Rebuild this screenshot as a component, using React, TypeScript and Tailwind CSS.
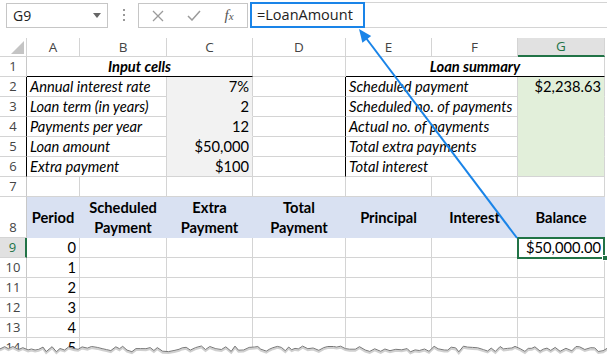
import type { ReactNode } from 'react'

const grid = 'border-[#d4d4d4]'

interface CellProps {
  w: string
  className?: string
  children?: ReactNode
}

const Cell = ({ w, className = '', children }: CellProps) => (
  <div
    className={`${w} h-full shrink-0 border-r border-b ${grid} flex items-center overflow-visible whitespace-nowrap px-[3px] ${className}`}
  >
    {children}
  </div>
)

const RowHead = ({
  n,
  className = '',
  active = false,
}: {
  n: string
  className?: string
  active?: boolean
}) => (
  <div
    className={`w-[27px] h-full shrink-0 border-b ${grid} flex justify-center font-['Open_Sans',sans-serif] text-[13px] ${
      active
        ? 'bg-[#e1e1e1] text-[#217346] border-r-2 border-r-[#217346]'
        : 'text-[#444] border-r border-r-[#c8c8c8]'
    } ${className}`}
  >
    {n}
  </div>
)

const Toolbar = () => (
  <div className="h-[38px] flex items-start pt-[2px] font-['Open_Sans',sans-serif]">
    <div className="ml-[6px] mt-[1px] w-[102px] h-[25px] border border-[#c6c6c6] flex items-center justify-between pl-[6px] pr-[6px] text-[14px] text-[#222]">
      <span>G9</span>
      <svg width="8" height="5" viewBox="0 0 8 5">
        <path d="M0 0h8L4 5z" fill="#666" />
      </svg>
    </div>
    <div className="w-[30px] h-[25px] flex flex-col items-center justify-center gap-[3px] pl-[2px]">
      <span className="w-[2px] h-[2px] bg-[#999]" />
      <span className="w-[2px] h-[2px] bg-[#999]" />
      <span className="w-[2px] h-[2px] bg-[#999]" />
    </div>
    <div className="mt-[1px] w-[110px] h-[25px] border border-[#c6c6c6] flex items-center">
      <div className="w-[38px] flex justify-center">
        <svg width="12" height="12" viewBox="0 0 12 12">
          <path d="M1 1l10 10M11 1L1 11" stroke="#9b9b9b" strokeWidth="1.3" />
        </svg>
      </div>
      <div className="w-[34px] flex justify-center">
        <svg width="14" height="11" viewBox="0 0 14 11">
          <path d="M1 6l4 4 8-9" stroke="#9b9b9b" strokeWidth="1.5" fill="none" />
        </svg>
      </div>
      <div className="flex-1 flex justify-center font-['Liberation_Serif',serif] italic text-[15px] text-[#555]">
        f<span className="text-[11px] mt-[4px]">x</span>
      </div>
    </div>
    <div className="ml-[2px] flex-1 h-[26px] border-y border-[#d4d4d4] flex">
      <div className="w-[115px] h-[26px] -mt-[1px] border-2 border-[#1a84e8] flex items-center pl-[5px] text-[14.5px] text-[#222]">
        =LoanAmount
      </div>
    </div>
  </div>
)

const ColHeader = () => {
  const cols = [
    ['A', 'w-[53px]'],
    ['B', 'w-[87px]'],
    ['C', 'w-[86px]'],
    ['D', 'w-[93px]'],
    ['E', 'w-[86px]'],
    ['F', 'w-[86px]'],
  ]
  return (
    <div className="flex h-[19px] font-['Open_Sans',sans-serif] text-[13.5px] text-[#444]">
      <div className={`w-[27px] h-full border-r border-b ${grid} flex items-end justify-end p-[2px]`}>
        <svg width="13" height="13" viewBox="0 0 13 13">
          <path d="M13 0v13H0z" fill="#c4c4c4" />
        </svg>
      </div>
      {cols.map(([c, w]) => (
        <div key={c} className={`${w} h-full border-r border-b ${grid} flex items-center justify-center`}>
          {c}
        </div>
      ))}
      <div className="w-[87px] h-full bg-[#e1e1e1] border-r border-r-[#d4d4d4] border-b-2 border-b-[#217346] flex items-center justify-center text-[#217346]">
        G
      </div>
    </div>
  )
}

const inputs = [
  ['2', 'Annual interest rate', '7%', 'Scheduled payment', '$2,238.63'],
  ['3', 'Loan term (in years)', '2', 'Scheduled no. of payments', ''],
  ['4', 'Payments per year', '12', 'Actual no. of payments', ''],
  ['5', 'Loan amount', '$50,000', 'Total extra payments', ''],
  ['6', 'Extra payment', '$100', 'Total interest', ''],
]

const heads = [
  ['w-[53px]', ['Period']],
  ['w-[87px]', ['Scheduled', 'Payment']],
  ['w-[86px]', ['Extra', 'Payment']],
  ['w-[93px]', ['Total', 'Payment']],
  ['w-[86px]', ['Principal']],
  ['w-[86px]', ['Interest']],
  ['w-[87px]', ['Balance']],
] as const

const EmptyRow = ({ n, active = false, children }: { n: string; active?: boolean; children?: ReactNode }) => (
  <div className="flex h-[20px]">
    <RowHead n={n} active={active} />
    {children ?? <Cell w="w-[53px]" />}
    <Cell w="w-[87px]" />
    <Cell w="w-[86px]" />
    <Cell w="w-[93px]" />
    <Cell w="w-[86px]" />
    <Cell w="w-[86px]" />
    <Cell w="w-[87px]" />
  </div>
)

// jagged "torn paper" edge at the bottom
const tear = (dy = 0) => {
  let seed = 7
  const rnd = () => {
    seed = (seed * 9301 + 49297) % 233280
    return seed / 233280
  }
  const pts: string[] = []
  for (let x = 0; x <= 610; x += 3 + rnd() * 3) {
    pts.push(`${x.toFixed(1)},${(349 + dy + (rnd() - 0.5) * 6).toFixed(1)}`)
  }
  return pts.join(' ')
}

const App = () => {
  const edge = tear()
  const shadow = tear(1.5)
  return (
    <div className="relative w-[607px] h-[356px] overflow-hidden bg-white font-[Lato,sans-serif] text-[14.7px] text-black">
      <Toolbar />
      <ColHeader />

      <div className="flex h-[20px]">
        <RowHead n="1" />
        <div className={`w-[226px] h-full border-r ${grid} border-b border-b-black flex items-center justify-center font-bold italic`}>
          Input cells
        </div>
        <Cell w="w-[93px]" />
        <div className={`w-[259px] h-full border-r ${grid} border-b border-b-black flex items-center justify-center font-bold italic`}>
          Loan summary
        </div>
      </div>

      {inputs.map(([n, a, c, e, g], i) => {
        const last = i === inputs.length - 1
        return (
          <div key={n} className="flex h-[20px]">
            <RowHead n={n} className="border-r-black" />
            <Cell w="w-[140px]" className="italic">
              {a}
            </Cell>
            <Cell
              w="w-[86px]"
              className={`bg-[#f2f2f2] justify-end ${last ? '' : 'border-b-[#f2f2f2]'}`}
            >
              {c}
            </Cell>
            <Cell w="w-[93px]" className="border-r-black" />
            <Cell w="w-[172px]" className="italic">
              {e}
            </Cell>
            <Cell
              w="w-[87px]"
              className={`bg-[#e2efda] justify-end ${last ? '' : 'border-b-[#e2efda]'}`}
            >
              {g}
            </Cell>
          </div>
        )
      })}

      <EmptyRow n="7" />

      <div className="flex h-[41px]">
        <RowHead n="8" className="items-end" />
        {heads.map(([w, lines], i) => (
          <div
            key={i}
            className={`${w} h-full shrink-0 bg-[#d9e1f2] border-r border-b border-[#d9e1f2] flex flex-col items-center justify-center font-bold leading-[20px]`}
          >
            {lines.map((l) => (
              <span key={l}>{l}</span>
            ))}
          </div>
        ))}
      </div>

      <div className="flex h-[20px]">
        <RowHead n="9" active />
        <Cell w="w-[53px]" className="justify-end">
          0
        </Cell>
        <Cell w="w-[87px]" />
        <Cell w="w-[86px]" />
        <Cell w="w-[93px]" />
        <Cell w="w-[86px]" />
        <Cell w="w-[86px]" />
        <div className="relative w-[87px] h-full shrink-0 border-r border-b border-[#d4d4d4] flex items-center justify-end px-[3px]">
          $50,000.00
          <div className="absolute -left-[1px] -top-[1px] w-[88px] h-[22px] border-2 border-[#217346]" />
          <div className="absolute -right-[4px] -bottom-[4px] w-[6px] h-[6px] bg-[#217346] border border-white" />
        </div>
      </div>

      {['1', '2', '3', '4', '5'].map((v, i) => (
        <EmptyRow key={v} n={String(10 + i)}>
          <Cell w="w-[53px]" className="justify-end">
            {v}
          </Cell>
        </EmptyRow>
      ))}

      <svg className="absolute inset-0 pointer-events-none" width="607" height="356" viewBox="0 0 607 356">
        <line x1="517" y1="238" x2="366" y2="38" stroke="#1a84e8" strokeWidth="2" />
        <path d="M359 29L362.4 42.7L371.2 36.1Z" fill="#1a84e8" />
        <polygon points={`${edge} 610,360 0,360`} fill="white" />
        <polyline points={shadow} fill="none" stroke="#d0d0d0" strokeWidth="2" />
        <polyline points={edge} fill="none" stroke="#777" strokeWidth="1" />
      </svg>
    </div>
  )
}

export default App
